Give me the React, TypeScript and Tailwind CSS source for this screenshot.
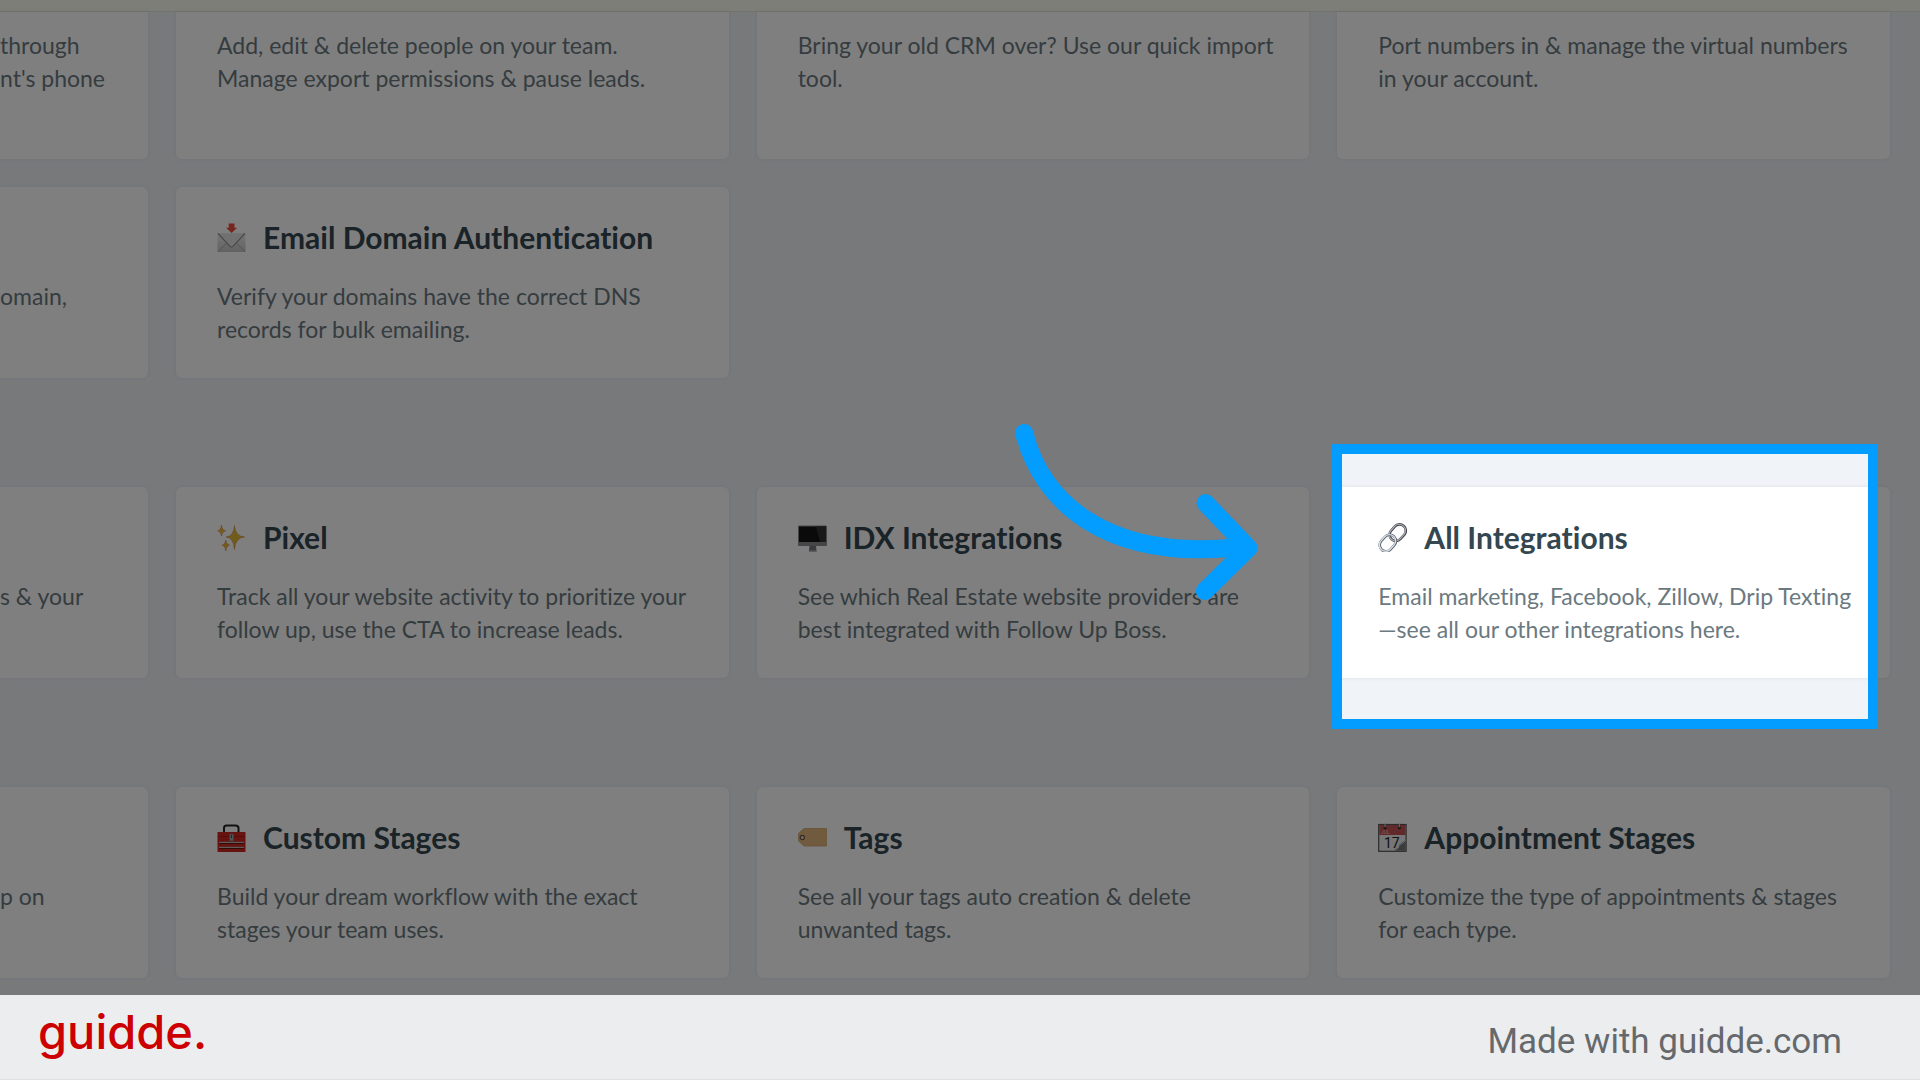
import type { ReactNode } from "react";

interface SettingCard {
  title?: string;
  text: string;
  icon?: ReactNode;
  highlighted?: boolean;
}

const EnvelopeIcon = () => (
  <svg viewBox="0 0 29 29" className="size-[29px] shrink-0">
    <defs>
      <linearGradient id="envelope" x1="0" y1="0" x2="0" y2="1">
        <stop offset="0" stopColor="#f2f2f2" />
        <stop offset="1" stopColor="#c4c4c4" />
      </linearGradient>
    </defs>
    <rect x="0.5" y="10" width="28" height="19" fill="url(#envelope)" />
    <path d="M1 28.5l10-9.5M28 28.5L18 19" stroke="#a3a3a3" strokeWidth="0.9" />
    <path
      d="M1 10.5l12 12.8q1.5 1.4 3 0L28 10.5"
      fill="#e2e2e2"
      stroke="#8f8f8f"
      strokeWidth="1.1"
    />
    <path d="M11.7 0.5h5.8v4.2h2.7L14.6 10 9 4.7h2.7z" fill="#ee4b3f" />
  </svg>
);

const SparklesIcon = () => (
  <svg viewBox="0 0 29 29" className="size-[29px] shrink-0" fill="#e2b836" stroke="#cf8b49" strokeWidth="0.6">
    <path d="M17.5 2.5Q18.2 13.3 27.5 14Q18.2 14.7 17.5 26.5Q16.8 14.7 9 14Q16.800 13.3 17.5 2.5z" />
    <path d="M4.5 2Q5 7 8.5 7.8Q5 8.6 4.5 13Q4 8.6 0.8 7.8Q4 7 4.5 2z" />
    <path d="M8.8 17Q9.3 21.5 12.5 22.2Q9.3 22.9 8.8 28Q8.3 22.9 5 22.2Q8.3 21.5 8.8 17z" />
  </svg>
);

const MonitorIcon = () => (
  <svg viewBox="0 0 29 29" className="size-[29px] shrink-0">
    <rect x="0" y="2.5" width="29" height="20.5" rx="1" fill="#8d8d90" />
    <rect x="1" y="3.5" width="27" height="15.5" fill="#141414" />
    <path d="M18 3.5H28V19h-6z" fill="#333" />
    <path d="M11.5 23H18l0.6 5.5h-7.7z" fill="#77777a" />
    <path d="M11 28h7.5" stroke="#b5b5b5" />
  </svg>
);

const LinkIcon = () => (
  <svg viewBox="0 0 29 29" className="size-[29px] shrink-0" fill="none">
    <g transform="rotate(-48 19.5 9.5)">
      <rect x="10.5" y="3.5" width="18" height="12.5" rx="6.2" stroke="#4b4246" strokeWidth="2.6" />
      <rect x="10.3" y="3.2" width="18" height="12.5" rx="6.2" stroke="#a9bac8" strokeWidth="1.1" />
    </g>
    <g transform="rotate(-48 9.5 20)">
      <rect x="0.7" y="14" width="18" height="12.5" rx="6.2" stroke="#5e5f66" strokeWidth="2.6" />
      <rect x="0.5" y="13.7" width="18" height="12.5" rx="6.2" stroke="#d5e3ee" strokeWidth="1.4" />
    </g>
  </svg>
);

const ToolboxIcon = () => (
  <svg viewBox="0 0 29 29" className="size-[29px] shrink-0">
    <path d="M7 9V5Q7 2.5 9.5 2.5h9Q21.500 2.5 21.5 5v4" fill="none" stroke="#252525" strokeWidth="2" />
    <rect x="0.5" y="9" width="28" height="20" rx="0.6" fill="#cf2820" />
    <path d="M1 13.500h27" stroke="#a81c18" />
    <path d="M2 19.8h25M2 24.8h25" stroke="#641815" strokeWidth="2.2" />
    <path d="M2 19.3h25M2 24.3h25" stroke="#c6b5b2" strokeWidth="1.3" />
    <rect x="12.3" y="11" width="4.5" height="7" rx="0.6" fill="#a7a7aa" stroke="#5f5f62" strokeWidth="0.6" />
    <path d="M14.5 12v3" stroke="#444" />
  </svg>
);

const TagIcon = () => (
  <svg viewBox="0 0 29 29" className="size-[29px] shrink-0">
    <path d="M6 5.5h22.500V23H6L0.5 18v-7.5z" fill="#e3b67c" stroke="#cfa56c" strokeWidth="0.8" />
    <circle cx="4.3" cy="14.5" r="2.1" fill="#ddd" stroke="#70543a" strokeWidth="1.2" />
  </svg>
);

const CalendarIcon = () => (
  <svg viewBox="0 0 29 29" className="size-[29px] shrink-0">
    <rect x="0.7" y="1.5" width="27.4" height="26.8" fill="#ededed" stroke="#555" strokeWidth="1.2" />
    <rect x="1.3" y="2" width="26.2" height="10" fill="#c25252" />
    <circle cx="7" cy="4.8" r="1.5" fill="#222" />
    <circle cx="21.3" cy="4.8" r="1.5" fill="#222" />
    <path d="M7 0v4.5M21.3 0v4.5" stroke="#c9dcd9" strokeWidth="1" />
    <text x="3" y="11" fontSize="5" fontWeight="400" fontFamily="Roboto, sans-serif" fill="#f2c4c4">
      JUL
    </text>
    <path d="M27.5 17v10.7H15l5-3 1.5-3.5z" fill="#777" />
    <path d="M27.5 17.5Q24 21.5 21 22Q21 26.5 15 27.5" fill="none" stroke="#ddd" />
    <text x="6" y="25" fontSize="14" fontWeight="400" fontFamily="Roboto, sans-serif" fill="#222">
      17
    </text>
  </svg>
);

const rows: SettingCard[][] = [
  [
    { text: "through\nnt's phone" },
    { text: "Add, edit & delete people on your team.\nManage export permissions & pause leads." },
    { text: "Bring your old CRM over? Use our quick import\ntool." },
    { text: "Port numbers in & manage the virtual numbers\nin your account." },
  ],
  [
    { text: "omain," },
    {
      title: "Email Domain Authentication",
      text: "Verify your domains have the correct DNS\nrecords for bulk emailing.",
      icon: <EnvelopeIcon />,
    },
  ],
  [
    { text: "s & your" },
    {
      title: "Pixel",
      text: "Track all your website activity to prioritize your\nfollow up, use the CTA to increase leads.",
      icon: <SparklesIcon />,
    },
    {
      title: "IDX Integrations",
      text: "See which Real Estate website providers are\nbest integrated with Follow Up Boss.",
      icon: <MonitorIcon />,
    },
    {
      title: "All Integrations",
      text: "Email marketing, Facebook, Zillow, Drip Texting\n—see all our other integrations here.",
      icon: <LinkIcon />,
      highlighted: true,
    },
  ],
  [
    { text: "p on" },
    {
      title: "Custom Stages",
      text: "Build your dream workflow with the exact\nstages your team uses.",
      icon: <ToolboxIcon />,
    },
    {
      title: "Tags",
      text: "See all your tags auto creation & delete\nunwanted tags.",
      icon: <TagIcon />,
    },
    {
      title: "Appointment Stages",
      text: "Customize the type of appointments & stages\nfor each type.",
      icon: <CalendarIcon />,
    },
  ],
];

// The huge spread shadow dims everything around the focused card
const Spotlight = () => (
  <div className="pointer-events-none absolute -top-[43px] right-3 -bottom-[51px] -left-[5px] z-10 border-10 border-[#039dff] shadow-[0_0_0_3000px_rgba(0,0,0,0.5)]">
    <svg
      viewBox="46 42 728 528"
      className="absolute top-[-30px] left-[-327px] h-[176px] w-[243px]"
      fill="none"
      stroke="#039dff"
      strokeWidth="54"
      strokeLinecap="round"
      strokeLinejoin="round"
    >
      <path d="M73 69C125 275 320 455 720 411" />
      <path d="M617 279L746 414L615 543" />
    </svg>
  </div>
);

const Card = ({ card, first, scrolled }: { card: SettingCard; first: boolean; scrolled: boolean }) => {
  const { title, text, icon, highlighted } = card;
  return (
    <a
      href="#"
      className={`relative block bg-white shadow-[0_0_4px_rgba(40,60,110,0.09)] ${
        scrolled ? "h-[147px] rounded-br-md pt-[17px]" : "h-[191px] rounded-r-md pt-[33px]"
      } ${first ? "" : scrolled ? "rounded-bl-md pl-[41px]" : "rounded-l-md pl-[41px]"}`}
    >
      {!scrolled && (
        <h2 className="mb-[26px] flex h-[34px] items-center gap-[17px] text-[30px] leading-[34px] font-bold whitespace-nowrap text-[#34464f]">
          {icon}
          {title}
        </h2>
      )}
      <p className="text-[23px] leading-[33px] whitespace-pre text-[#6b7980]">{text}</p>
      {highlighted && <Spotlight />}
    </a>
  );
};

export default function App() {
  return (
    <div className="flex h-screen flex-col overflow-hidden font-[Lato,sans-serif] [font-variant-ligatures:none]">
      <main className="flex-1 overflow-hidden bg-[#f0f3f7]">
        <div className="h-3 border-b border-[#e6e6da] bg-[#fbfcf0]" />
        {rows.map((row, index) => (
          <section
            key={index}
            className={`grid grid-cols-[148px_1fr_1fr_1fr] gap-x-7 pr-[30px] ${
              index === 0 ? "mb-7" : "mb-[109px]"
            }`}
          >
            {row.map((card, i) => (
              <Card key={card.text} card={card} first={i === 0} scrolled={index === 0} />
            ))}
          </section>
        ))}
      </main>
      <footer className="flex h-[85px] shrink-0 items-center justify-between border-b border-[#dfe0e2] bg-[#ecedef] pr-[78px] pl-[38px]">
        <a
          href="#"
          className="pb-[10px] font-[Inter,sans-serif] text-[47px] leading-[60px] font-medium text-[#cc0000]"
        >
          guidde.
        </a>
        <p className="pt-[10px] font-[Roboto,sans-serif] text-[35px] leading-[42px] text-[#66696c]">
          Made with guidde.com
        </p>
      </footer>
    </div>
  );
}
